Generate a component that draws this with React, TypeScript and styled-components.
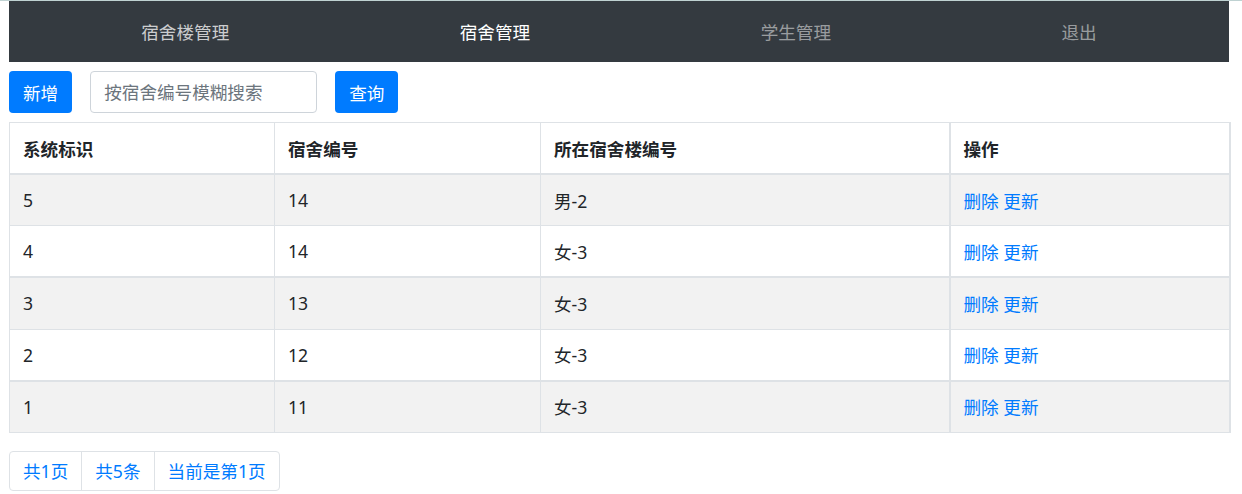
import React from "react";
import styled, { createGlobalStyle } from "styled-components";

const GlobalStyle = createGlobalStyle`
  html, body { margin: 0; padding: 0; background: #fff; }
  body {
    font-family: "Noto Sans", "Noto Sans CJK SC", sans-serif;
    font-size: 17.6px;
    color: #212529;
  }
`;

const TopLine = styled.div`
  height: 1px;
  background: #bfd2d2;
`;

const Page = styled.div`
  width: 1220px;
  margin-left: 9px;
`;

const Navbar = styled.nav`
  height: 61px;
  background: #343a40;
  display: flex;
  align-items: center;
  justify-content: space-around;
  padding: 0 17px;
`;

const NavLink = styled.a<{ $tone: "active" | "light" | "muted" }>`
  font-size: 17.6px;
  line-height: 26px;
  text-decoration: none;
  cursor: pointer;
  color: ${(p) =>
    p.$tone === "active" ? "#ffffff" : p.$tone === "light" ? "rgba(255,255,255,0.75)" : "rgba(255,255,255,0.5)"};
`;

const Toolbar = styled.div`
  display: flex;
  align-items: center;
  gap: 18px;
  margin: 9px 0 9px;
`;

const Button = styled.button`
  height: 42px;
  padding: 0 14px;
  border: none;
  border-radius: 4px;
  background: #007bff;
  color: #fff;
  font-family: inherit;
  font-size: 17.6px;
`;

const SearchInput = styled.input`
  box-sizing: border-box;
  width: 227px;
  height: 42px;
  padding: 0 13px;
  border: 1px solid #ced4da;
  border-radius: 4px;
  font-family: inherit;
  font-size: 17.6px;
  color: #495057;
  &::placeholder { color: #6c757d; }
`;

const Table = styled.table`
  width: 1220px;
  border-collapse: collapse;
  table-layout: fixed;
  border: 1px solid #dee2e6;
`;

const HeadCell = styled.th<{ $thick?: boolean }>`
  height: 50px;
  padding: 0 13px;
  text-align: left;
  font-weight: 700;
  font-size: 17.6px;
  border: 1px solid #dee2e6;
  border-bottom: 2px solid #dee2e6;
  border-left-width: ${(p) => (p.$thick ? "2px" : "1px")};
  border-right-width: ${(p) => (p.$thick ? "2px" : "1px")};
`;

const Row = styled.tr<{ $striped: boolean; $thickTop: boolean }>`
  background: ${(p) => (p.$striped ? "#f2f2f2" : "#fff")};
  & > td { border-top-width: ${(p) => (p.$thickTop ? "2px" : "1px")}; }
`;

const Cell = styled.td<{ $thick?: boolean }>`
  height: 50.2px;
  padding: 0 13px;
  font-size: 17.6px;
  border: 1px solid #dee2e6;
  border-left-width: ${(p) => (p.$thick ? "2px" : "1px")};
  border-right-width: ${(p) => (p.$thick ? "2px" : "1px")};
`;

const ActionLink = styled.a`
  color: #007bff;
  text-decoration: none;
  cursor: pointer;
`;

const Pagination = styled.ul`
  display: inline-flex;
  list-style: none;
  margin: 18px 0 0;
  padding: 0;
`;

const PageItem = styled.li`
  height: 38px;
  display: flex;
  align-items: center;
  padding: 0 13px;
  border: 1px solid #dee2e6;
  margin-left: -1px;
  color: #007bff;
  font-size: 17.6px;
  &:first-child { margin-left: 0; border-radius: 4px 0 0 4px; }
  &:last-child { border-radius: 0 4px 4px 0; }
`;

const rows = [
  { id: 5, room: "14", building: "男-2" },
  { id: 4, room: "14", building: "女-3" },
  { id: 3, room: "13", building: "女-3" },
  { id: 2, room: "12", building: "女-3" },
  { id: 1, room: "11", building: "女-3" },
];

export default function App() {
  return (
    <>
      <GlobalStyle />
      <TopLine />
      <Page>
        <Navbar>
          <NavLink $tone="light">宿舍楼管理</NavLink>
          <NavLink $tone="active">宿舍管理</NavLink>
          <NavLink $tone="muted">学生管理</NavLink>
          <NavLink $tone="muted">退出</NavLink>
        </Navbar>
        <Toolbar>
          <Button>新增</Button>
          <SearchInput placeholder="按宿舍编号模糊搜索" />
          <Button>查询</Button>
        </Toolbar>
        <Table>
          <colgroup>
            <col style={{ width: 265 }} />
            <col style={{ width: 266 }} />
            <col style={{ width: 409 }} />
            <col style={{ width: 280 }} />
          </colgroup>
          <thead>
            <tr>
              <HeadCell>系统标识</HeadCell>
              <HeadCell>宿舍编号</HeadCell>
              <HeadCell>所在宿舍楼编号</HeadCell>
              <HeadCell $thick>操作</HeadCell>
            </tr>
          </thead>
          <tbody>
            {rows.map((r, i) => (
              <Row key={r.id} $striped={i % 2 === 0} $thickTop={i === 2 || i === 4}>
                <Cell>{r.id}</Cell>
                <Cell>{r.room}</Cell>
                <Cell>{r.building}</Cell>
                <Cell $thick>
                  <ActionLink>删除</ActionLink> <ActionLink>更新</ActionLink>
                </Cell>
              </Row>
            ))}
          </tbody>
        </Table>
        <Pagination>
          <PageItem>共1页</PageItem>
          <PageItem>共5条</PageItem>
          <PageItem>当前是第1页</PageItem>
        </Pagination>
      </Page>
    </>
  );
}
